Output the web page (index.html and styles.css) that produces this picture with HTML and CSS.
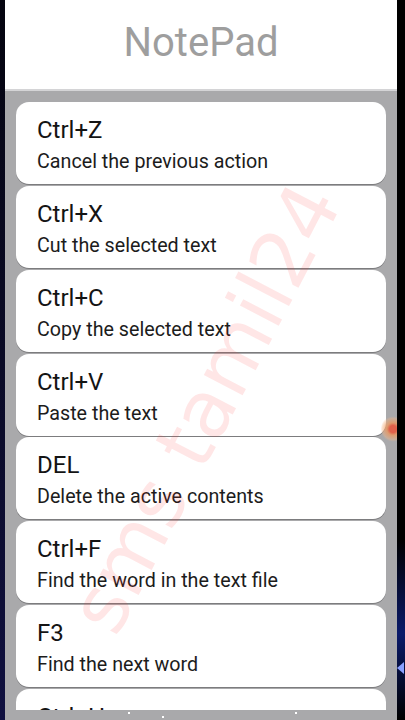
FILE: index.html
```html
<!DOCTYPE html>
<html>
<head>
<meta charset="utf-8">
<link rel="stylesheet" href="styles.css">
</head>
<body>
<div class="frame">
  <div class="edge-left"></div>
  <div class="screen">
    <header class="appbar">NotePad</header>
    <div class="divider"></div>
    <main class="list">
      <div class="card"><div class="key">Ctrl+Z</div><div class="desc">Cancel the previous action</div></div>
      <div class="card"><div class="key">Ctrl+X</div><div class="desc">Cut the selected text</div></div>
      <div class="card"><div class="key">Ctrl+C</div><div class="desc">Copy the selected text</div></div>
      <div class="card"><div class="key">Ctrl+V</div><div class="desc">Paste the text</div></div>
      <div class="card"><div class="key">DEL</div><div class="desc">Delete the active contents</div></div>
      <div class="card"><div class="key">Ctrl+F</div><div class="desc">Find the word in the text file</div></div>
      <div class="card"><div class="key">F3</div><div class="desc">Find the next word</div></div>
      <div class="card"><div class="key">Ctrl+H</div></div>
    </main>
    <div class="navbar"><span class="dot d1"></span><span class="dot d2"></span><span class="dot d3"></span></div>
    <div class="touch"></div>
  </div>
  <div class="edge-right"><div class="arrow"></div></div>
  <div class="watermark">sms tamil24</div>
</div>
</body>
</html>
```
FILE: styles.css
```css
html, body {
  margin: 0;
  padding: 0;
  background: #06061a;
  overflow: hidden;
}
.frame {
  position: relative;
  display: flex;
  width: 405px;
  height: 720px;
  overflow: hidden;
  font-family: Roboto, "Noto Sans", sans-serif;
}
.edge-left {
  width: 5px;
  flex: none;
  background: linear-gradient(#050510, #0b0b2a 60%, #101040);
}
.edge-right {
  position: relative;
  width: 8px;
  flex: none;
  background: linear-gradient(#000 0%, #000 75%, #0a1a6a 88%, #000 100%);
}
.arrow {
  position: absolute;
  left: 0;
  top: 662px;
  width: 0;
  height: 0;
  border-top: 6px solid transparent;
  border-bottom: 6px solid transparent;
  border-right: 7px solid #8aa0ff;
}
.screen {
  position: relative;
  width: 392px;
  flex: none;
  display: flex;
  flex-direction: column;
  background: #a9a9ab;
  overflow: hidden;
}
.appbar {
  height: 89px;
  flex: none;
  background: #fff;
  color: #9e9e9e;
  font-size: 40px;
  line-height: 86px;
  text-align: center;
  box-sizing: border-box;
}
.divider {
  height: 2px;
  flex: none;
  background: #d4d4d6;
}
.list {
  flex: 1;
  display: flex;
  flex-direction: column;
  gap: 1.85px;
  padding: 11px 11px 0 11px;
  overflow: hidden;
}
.card {
  flex: none;
  height: 82px;
  box-sizing: border-box;
  background: #fff;
  border-radius: 13px;
  padding: 14px 0 0 21px;
  box-shadow: 0 1px 0 #7c7c7e;
}
.key {
  font-size: 24px;
  line-height: 28px;
  color: #141414;
}
.desc {
  margin-top: 6px;
  font-size: 19.7px;
  line-height: 24px;
  color: #1c1c1c;
}
.navbar {
  position: absolute;
  left: 0;
  right: 0;
  bottom: 0;
  height: 10px;
  background: #a9a9ab;
}
.dot {
  position: absolute;
  width: 2px;
  height: 2px;
  background: #fff;
}
.d1 { left: 123px; top: 2px; }
.d2 { left: 157px; top: 6px; }
.d3 { left: 290px; top: 2px; }
.touch {
  position: absolute;
  left: 376px;
  top: 416px;
  width: 24px;
  height: 26px;
  border-radius: 50%;
  background: radial-gradient(circle, #e0604a 0 20%, rgba(240,150,90,0.75) 35%, rgba(245,180,130,0.4) 60%, rgba(255,255,255,0) 72%);
}
.watermark {
  position: absolute;
  left: 205px;
  top: 408px;
  transform: translate(-50%, -50%) rotate(-62.5deg);
  white-space: nowrap;
  font-family: "DejaVu Sans", sans-serif;
  font-size: 80px;
  color: rgba(255, 50, 50, 0.12);
  pointer-events: none;
}
```
